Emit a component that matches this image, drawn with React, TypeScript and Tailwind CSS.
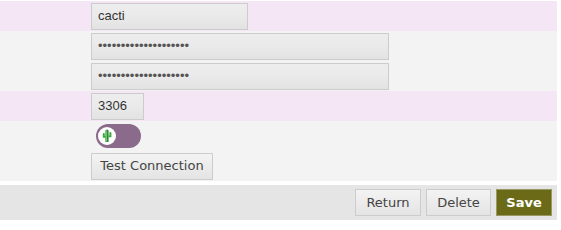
import React from 'react';

const inputCls =
  'h-[27px] border border-[#cccccc] bg-gradient-to-b from-[#ededed] via-[#eaeaea] to-[#e2e2e2] px-[6px] text-[13px] text-[#333] font-["Liberation_Sans",Arial,sans-serif] flex items-center';

const btnCls =
  'h-[27px] border border-[#cccccc] bg-gradient-to-b from-[#f3f3f3] to-[#e4e4e4] text-[13px] text-[#444] font-["DejaVu_Sans",Verdana,sans-serif] flex items-center justify-center';

const Cactus: React.FC = () => (
  <svg width="10" height="14" viewBox="0 0 10 14">
    <path d="M3.4 2a1.6 1.6 0 0 1 3.2 0V13H3.4z" fill="#2c8a34" />
    <path d="M0.8 5a1 1 0 0 1 2 0v2h1v1.8H0.8z" fill="#3aa845" />
    <path d="M6.4 6.4h1V4a1 1 0 0 1 2 0v4.2h-3z" fill="#3aa845" />
    <path d="M4.3 1.5v11" stroke="#8ee07a" strokeWidth="0.9" />
  </svg>
);

const Row: React.FC<{ bg: string; children: React.ReactNode }> = ({ bg, children }) => (
  <div className={`h-[30px] pl-[91px] flex items-center ${bg}`}>{children}</div>
);

export default function App() {
  return (
    <div className="w-[557px] pt-px bg-white font-['DejaVu_Sans',Verdana,sans-serif]">
      <Row bg="bg-[#f5e6f5]">
        <div className={`${inputCls} w-[157px] text-[13.5px]`}>cacti</div>
      </Row>
      <Row bg="bg-[#f3f3f3]">
        <div className={`${inputCls} w-[298px] text-[#555]`}>••••••••••••••••••••</div>
      </Row>
      <Row bg="bg-[#f3f3f3]">
        <div className={`${inputCls} w-[298px] text-[#555]`}>••••••••••••••••••••</div>
      </Row>
      <Row bg="bg-[#f5e6f5]">
        <div className={`${inputCls} w-[53px] text-[13.5px]`}>3306</div>
      </Row>
      <Row bg="bg-[#f3f3f3]">
        <div className="ml-[5px] w-[45px] h-[24px] rounded-full bg-[#8b6b8b] flex items-center pl-[2px]">
          <div className="w-[18px] h-[18px] rounded-full bg-white flex items-center justify-center">
            <Cactus />
          </div>
        </div>
      </Row>
      <Row bg="bg-[#f3f3f3]">
        <div className={`${btnCls} w-[122px]`}>Test Connection</div>
      </Row>
      <div className="h-[4px]" />
      <div className="h-[35px] bg-[#e5e5e5] flex items-center justify-end gap-[5px] pr-[5px]">
        <div className={`${btnCls} w-[66px]`}>Return</div>
        <div className={`${btnCls} w-[65px]`}>Delete</div>
        <div className="h-[27px] w-[56px] border border-[#999966] bg-[#6b6b17] text-white text-[13px] font-bold flex items-center justify-center">
          Save
        </div>
      </div>
    </div>
  );
}
